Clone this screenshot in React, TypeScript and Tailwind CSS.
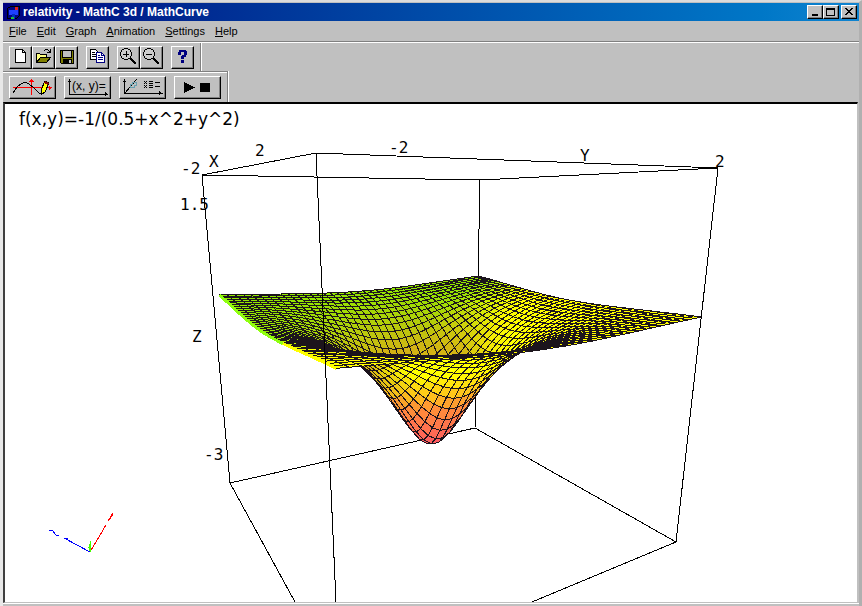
import React from "react";

type Vec3 = [number, number, number];
type Point = [number, number];

// ---------------------------------------------------------------------------
// Surface model: f(x,y) = -1 / (0.5 + x^2 + y^2) inside the box
// x, y in [-2, 2] and z in [-3, 1.5].
// ---------------------------------------------------------------------------

const STEPS = 40;
const V_START = 0.02;

const surface = (x: number, y: number) => -1 / (0.5 + x * x + y * y);

// Homogeneous camera: origin plus one direction for each box axis.
const ORIGIN: Vec3 = [316, 153, 1];
const AXIS_U: Vec3 = [58.7, 171.6, 0.855];
const AXIS_V: Vec3 = [748.8, 96.1, 0.483];
const AXIS_W: Vec3 = [107.75, 694, 0.25];

function project(u: number, v: number, w: number): Point {
  const h = [0, 1, 2].map((i) => ORIGIN[i] + u * AXIS_U[i] + v * AXIS_V[i] + w * AXIS_W[i]);
  return [h[0] / h[2], h[1] / h[2]];
}

const clamp = (t: number) => Math.max(0, Math.min(1, t));

function mix(a: Vec3, b: Vec3, t: number): Vec3 {
  const k = clamp(t);
  return [a[0] + (b[0] - a[0]) * k, a[1] + (b[1] - a[1]) * k, a[2] + (b[2] - a[2]) * k];
}

const GREEN: Vec3 = [146, 232, 0];
const YELLOW: Vec3 = [255, 255, 0];
const GOLD: Vec3 = [212, 178, 20];
const ORANGE: Vec3 = [255, 158, 45];
const ROSE: Vec3 = [255, 88, 98];

function shade(u: number, v: number, z: number, above: boolean): string {
  const q = -z;
  let c: Vec3;
  if (above) {
    c = mix(YELLOW, GREEN, (u - 0.25 - 0.5 * v) / 0.25 + 0.3);
    const goldness = ((q - 0.22) / 0.7) * (1 - clamp((v - u - 0.05) / 0.25));
    c = mix(c, GOLD, goldness);
  } else {
    c = mix(YELLOW, ORANGE, (q - 0.75) / 0.55);
    c = mix(c, ROSE, (q - 1.15) / 0.8);
    const leftness = clamp((u - v + 0.02) / 0.2) * clamp((1.5 - q) / 0.6);
    c = mix(c, GOLD, leftness * 0.95);
  }
  return `rgb(${c.map(Math.round).join(",")})`;
}

function buildFacets() {
  const us = Array.from({ length: STEPS + 1 }, (_, i) => i / STEPS);
  const vs = us.map((t) => V_START + t * (1 - V_START));
  const height = (u: number, v: number) => surface(4 * u - 2, 4 * v - 2);
  const grid = us.map((u) => vs.map((v) => project(u, v, (1.5 - height(u, v)) / 4.5)));
  const facets: { points: string; fill: string }[] = [];
  for (let i = STEPS - 1; i >= 0; i--) {
    for (let j = STEPS - 1; j >= 0; j--) {
      const quad = [grid[i][j], grid[i + 1][j], grid[i + 1][j + 1], grid[i][j + 1]];
      let area = 0;
      quad.forEach((p, k) => {
        const n = quad[(k + 1) % 4];
        area += p[0] * n[1] - n[0] * p[1];
      });
      const u = (us[i] + us[i + 1]) / 2;
      const v = (vs[j] + vs[j + 1]) / 2;
      facets.push({
        points: toPoints(quad),
        fill: shade(u, v, height(u, v), area > 0),
      });
    }
  }
  return { facets, edge: grid.map((row) => row[0]) };
}

function toPoints(pts: Point[]) {
  return pts.map((p) => `${p[0].toFixed(1)},${p[1].toFixed(1)}`).join(" ");
}

const { facets, edge } = buildFacets();

const axisLabels: { text: string; x: number; y: number }[] = [
  { text: "-2", x: 181, y: 174 },
  { text: "X", x: 209, y: 167 },
  { text: "2", x: 255, y: 156 },
  { text: "-2", x: 389, y: 153 },
  { text: "Y", x: 580, y: 161 },
  { text: "2", x: 715, y: 167 },
  { text: "1.5", x: 180, y: 210 },
  { text: "Z", x: 192, y: 342 },
  { text: "-3", x: 204, y: 460 },
];

function Plot() {
  return (
    <svg viewBox="5 104 852 498" className="block w-full" role="img" aria-label="Surface plot">
      <text x="19" y="125" className="fill-black font-['DejaVu_Sans',sans-serif] text-[17px]">
        f(x,y)=-1/(0.5+x^2+y^2)
      </text>
      <g stroke="#000" fill="none" shapeRendering="crispEdges">
        <path d="M480 180 L475 428 L230 483 M475 428 L676 542" />
      </g>
      <g stroke="#1c141c" strokeWidth="1" strokeLinejoin="round" shapeRendering="crispEdges">
        {facets.map((f, i) => (
          <polygon key={i} points={f.points} fill={f.fill} />
        ))}
      </g>
      <g fill="none" strokeWidth="3" shapeRendering="crispEdges">
        <polyline points={toPoints(edge.slice(13))} stroke="#90ff10" />
        <polyline points={toPoints(edge.slice(0, 14))} stroke="#ffff00" />
      </g>
      <g stroke="#000" fill="none" shapeRendering="crispEdges">
        <path d="M316 153 L718 168 L480 180 L202 175 Z" />
        <path d="M202 175 L230 483 L295 602 M718 168 L676 542 L532 602 M316 153 L336 602" />
      </g>
      <g className="fill-black font-['DejaVu_Sans_Mono',monospace] text-[16px]">
        {axisLabels.map((l, i) => (
          <text key={i} x={l.x} y={l.y}>
            {l.text}
          </text>
        ))}
      </g>
      <g fill="none" shapeRendering="crispEdges">
        <path d="M90 552 L64 538 M64 538 h4 M59 535 L56 535 L52 530 L49 531" stroke="#00f" />
        <path d="M90 552 L106 525 M103 530 L106 525 M108 521 L113 513 M110 519 L113 514" stroke="#f00" />
        <path d="M90 552 L91 541 M89 544 V551 M88 547 h2" stroke="#4f0" />
      </g>
    </svg>
  );
}

// ---------------------------------------------------------------------------
// Icons
// ---------------------------------------------------------------------------

function Icon({ w, h = 20, children }: { w: number; h?: number; children: React.ReactNode }) {
  return (
    <svg width={w} height={h} viewBox={`0 0 ${w} ${h}`} shapeRendering="crispEdges" aria-hidden="true">
      {children}
    </svg>
  );
}

const NewIcon = () => (
  <Icon w={20}>
    <path d="M4.500 2.500h7l3 3v10h-10z" fill="#fff" stroke="#000" />
    <path d="M11.500 2.500v3h3" fill="none" stroke="#000" />
  </Icon>
);

const OpenIcon = () => (
  <Icon w={20}>
    <path d="M2.500 15.500v-9h3l1 1h6v3" fill="#ffff80" stroke="#000" />
    <path d="M2.500 15.500l4-5h10l-4 5z" fill="#808000" stroke="#000" />
    <path d="M10 3.500h1M11 2.500h3M14 3.500h1M15 4.500h1M13 5.500h4M16.500 2v4" stroke="#000" />
  </Icon>
);

const SaveIcon = () => (
  <Icon w={20}>
    <path d="M3.500 3.500h13v13h-12l-1-1z" fill="#808000" stroke="#000" />
    <rect x="6" y="4" width="8" height="6" fill="#c0c0c0" />
    <path d="M5.500 4v6.500h9V4" fill="none" stroke="#000" />
    <rect x="6" y="12" width="9" height="4" fill="#000" />
    <rect x="12" y="13" width="2" height="3" fill="#c0c0c0" />
  </Icon>
);

const CopyIcon = () => (
  <Icon w={20}>
    <path d="M2.500 2.500h5l3 3v7h-8z" fill="#fff" stroke="#000" />
    <path d="M4 5.500h3M4 7.500h4M4 9.500h4" stroke="#000" />
    <path d="M8.500 5.500h5l3 3v7h-8z" fill="#fff" stroke="#000080" />
    <path d="M13.500 5.500v3h3M10 8.500h2M10 10.500h5M10 12.500h5" fill="none" stroke="#000080" />
  </Icon>
);

const ZoomIcon = ({ plus = false }: { plus?: boolean }) => (
  <Icon w={20}>
    <circle cx="7" cy="7" r="5.500" fill="#ccc" stroke="#000" />
    <path d="M4 7.500h6" stroke="#000" />
    {plus && <path d="M7.500 4v6" stroke="#000" />}
    <path d="M11 11l6 6" stroke="#000" strokeWidth="2" />
  </Icon>
);

const HelpIcon = () => (
  <Icon w={20}>
    <path d="M5 5h3v3h-3zM6 3h7v2h-7zM11 4h3v4h-3zM9 8h4v2h-4zM8 9h3v3h-3zM8 13h3v3h-3z" fill="#000080" />
  </Icon>
);

const CurveIcon = () => (
  <Icon w={44}>
    <path d="M2 10.500h39M38 8.500v4M39 9.500v2M20.500 2v16M18 4.500h5M19 3.500h3" stroke="#f00" fill="none" />
    <path d="M2 16 L6 10 L10 7 L14 5 L18 7 L23 11 L28 16 L31 16" stroke="#000" fill="none" />
    <path d="M34 4l4 2-4 9-4 3 0-5z" fill="#ff0" stroke="#000" />
    <path d="M34 4l4 2-1 2-4-2z" fill="#800000" />
  </Icon>
);

const FormulaIcon = () => (
  <Icon w={44}>
    <path d="M3.500 2v15.500h38M2 4.500h3M39 15v4M40 16v2" stroke="#000" fill="none" />
    <text x="6" y="13" className="fill-black font-['Liberation_Sans',sans-serif] text-[12px]">
      (x, y)=
    </text>
  </Icon>
);

const ParamIcon = () => (
  <Icon w={44}>
    <path d="M3.500 2v14.500h38M2 4.500h3M38 14v4M39 15v2" stroke="#000" fill="none" />
    <path d="M4 16L16 2" stroke="#000" />
    <path d="M9 7h2v-2h4v3h-2v2h-4z" fill="none" stroke="#68a0b0" />
    <path
      d="M23 4l3 3M26 4l-3 3M23 8l3 3M26 8l-3 3M28 4.500h4M28 6.500h4M28 8.500h4M28 10.500h4M34 5.500h5M34 9.500h5"
      stroke="#000"
    />
  </Icon>
);

const PlayIcon = () => (
  <Icon w={44}>
    <path d="M8 5v11l11-5.500z" fill="#000" />
    <rect x="24" y="6" width="10" height="9" fill="#000" />
  </Icon>
);

// ---------------------------------------------------------------------------
// Window chrome
// ---------------------------------------------------------------------------

const raised =
  "flex items-center justify-center border border-t-white border-l-white border-r-black border-b-black bg-[#c0c0c0] shadow-[inset_-1px_-1px_0_#808080]";

function ToolButton({ label, wide = false, children }: { label: string; wide?: boolean; children: React.ReactNode }) {
  return (
    <button type="button" aria-label={label} className={`${raised} ${wide ? "h-[23px] w-[47px]" : "h-[23px] w-[23px]"}`}>
      {children}
    </button>
  );
}

function CaptionButton({ label, children }: { label: string; children: React.ReactNode }) {
  return (
    <button type="button" aria-label={label} className={`${raised} h-[14px] w-[16px]`}>
      <svg width="12" height="10" viewBox="0 0 12 10" shapeRendering="crispEdges" fill="none" stroke="#000">
        {children}
      </svg>
    </button>
  );
}

const menus = ["File", "Edit", "Graph", "Animation", "Settings", "Help"];

export default function App() {
  return (
    <div className="flex min-h-screen flex-col border-t-2 border-r-[3px] border-l-[3px] border-t-[#dcdcdc] border-r-[#b0b0b0] border-l-[#e8e8e8] bg-[#c0c0c0] pt-px font-['Liberation_Sans',Arial,sans-serif] text-black">
      <header className="flex h-[18px] items-center bg-linear-to-r from-[#000080] to-[#1084d0] pr-0.5 pl-[3px]">
        <svg width="15" height="15" viewBox="0 0 15 15" shapeRendering="crispEdges" aria-hidden="true">
          <path d="M1.500 3.500l3-2h9v9l-3 3h-9z" fill="none" stroke="#000" />
          <rect x="3" y="5" width="9" height="5" fill="#2040ff" />
          <path d="M6 9h3v5h-3z" fill="#0030c0" />
          <path d="M9 2h3v3h-3z" fill="#e02020" />
          <path d="M5 12h3v2h-3z" fill="#20c040" />
        </svg>
        <h1 className="ml-0.5 flex-1 text-[12px] leading-4 font-bold text-white">relativity - MathC 3d / MathCurve</h1>
        <div className="flex">
          <CaptionButton label="Minimize">
            <path d="M3 7.500h6M3 8.500h6" />
          </CaptionButton>
          <CaptionButton label="Maximize">
            <path d="M1.500 1.500h8v7h-8zM1 2.500h9" />
          </CaptionButton>
          <div className="ml-0.5">
            <CaptionButton label="Close">
              <path d="M2 1l7 7M3 1l7 7M9 1l-7 7M10 1l-7 7" />
            </CaptionButton>
          </div>
        </div>
      </header>

      <nav className="flex h-[21px] items-center gap-2.5 border-b border-[#808080] pl-1.5 text-[11px] leading-4">
        {menus.map((m) => (
          <button key={m} type="button">
            <span className="underline">{m[0]}</span>
            {m.slice(1)}
          </button>
        ))}
      </nav>

      <div role="toolbar" aria-label="Standard" className="flex h-[29px] items-center border-t border-white pl-1.5">
        <ToolButton label="New"><NewIcon /></ToolButton>
        <ToolButton label="Open"><OpenIcon /></ToolButton>
        <ToolButton label="Save"><SaveIcon /></ToolButton>
        <div className="flex pl-2">
          <ToolButton label="Copy"><CopyIcon /></ToolButton>
        </div>
        <div className="flex pl-2">
          <ToolButton label="Zoom in"><ZoomIcon plus /></ToolButton>
          <ToolButton label="Zoom out"><ZoomIcon /></ToolButton>
        </div>
        <div className="flex pl-2">
          <ToolButton label="Help"><HelpIcon /></ToolButton>
        </div>
        <div className="ml-1.5 h-full w-0.5 border-r border-l border-r-white border-l-[#808080]" />
      </div>

      <div className="flex">
        <div
          role="toolbar"
          aria-label="Graph"
          className="flex h-[31px] items-center gap-2 border-t border-r border-t-[#808080] border-r-[#808080] pr-1.5 pl-1.5 shadow-[inset_0_1px_0_#fff,1px_0_0_#fff]"
        >
          <ToolButton label="Curve" wide><CurveIcon /></ToolButton>
          <ToolButton label="Formula" wide><FormulaIcon /></ToolButton>
          <ToolButton label="Parameters" wide><ParamIcon /></ToolButton>
          <ToolButton label="Play or stop" wide><PlayIcon /></ToolButton>
        </div>
      </div>

      <main className="mr-px border-t-2 border-r border-b border-l-2 border-t-black border-r-[#c0c0c0] border-b-[#c0c0c0] border-l-[#404040] bg-white">
        <Plot />
      </main>
      <div className="h-px bg-white" />
    </div>
  );
}
